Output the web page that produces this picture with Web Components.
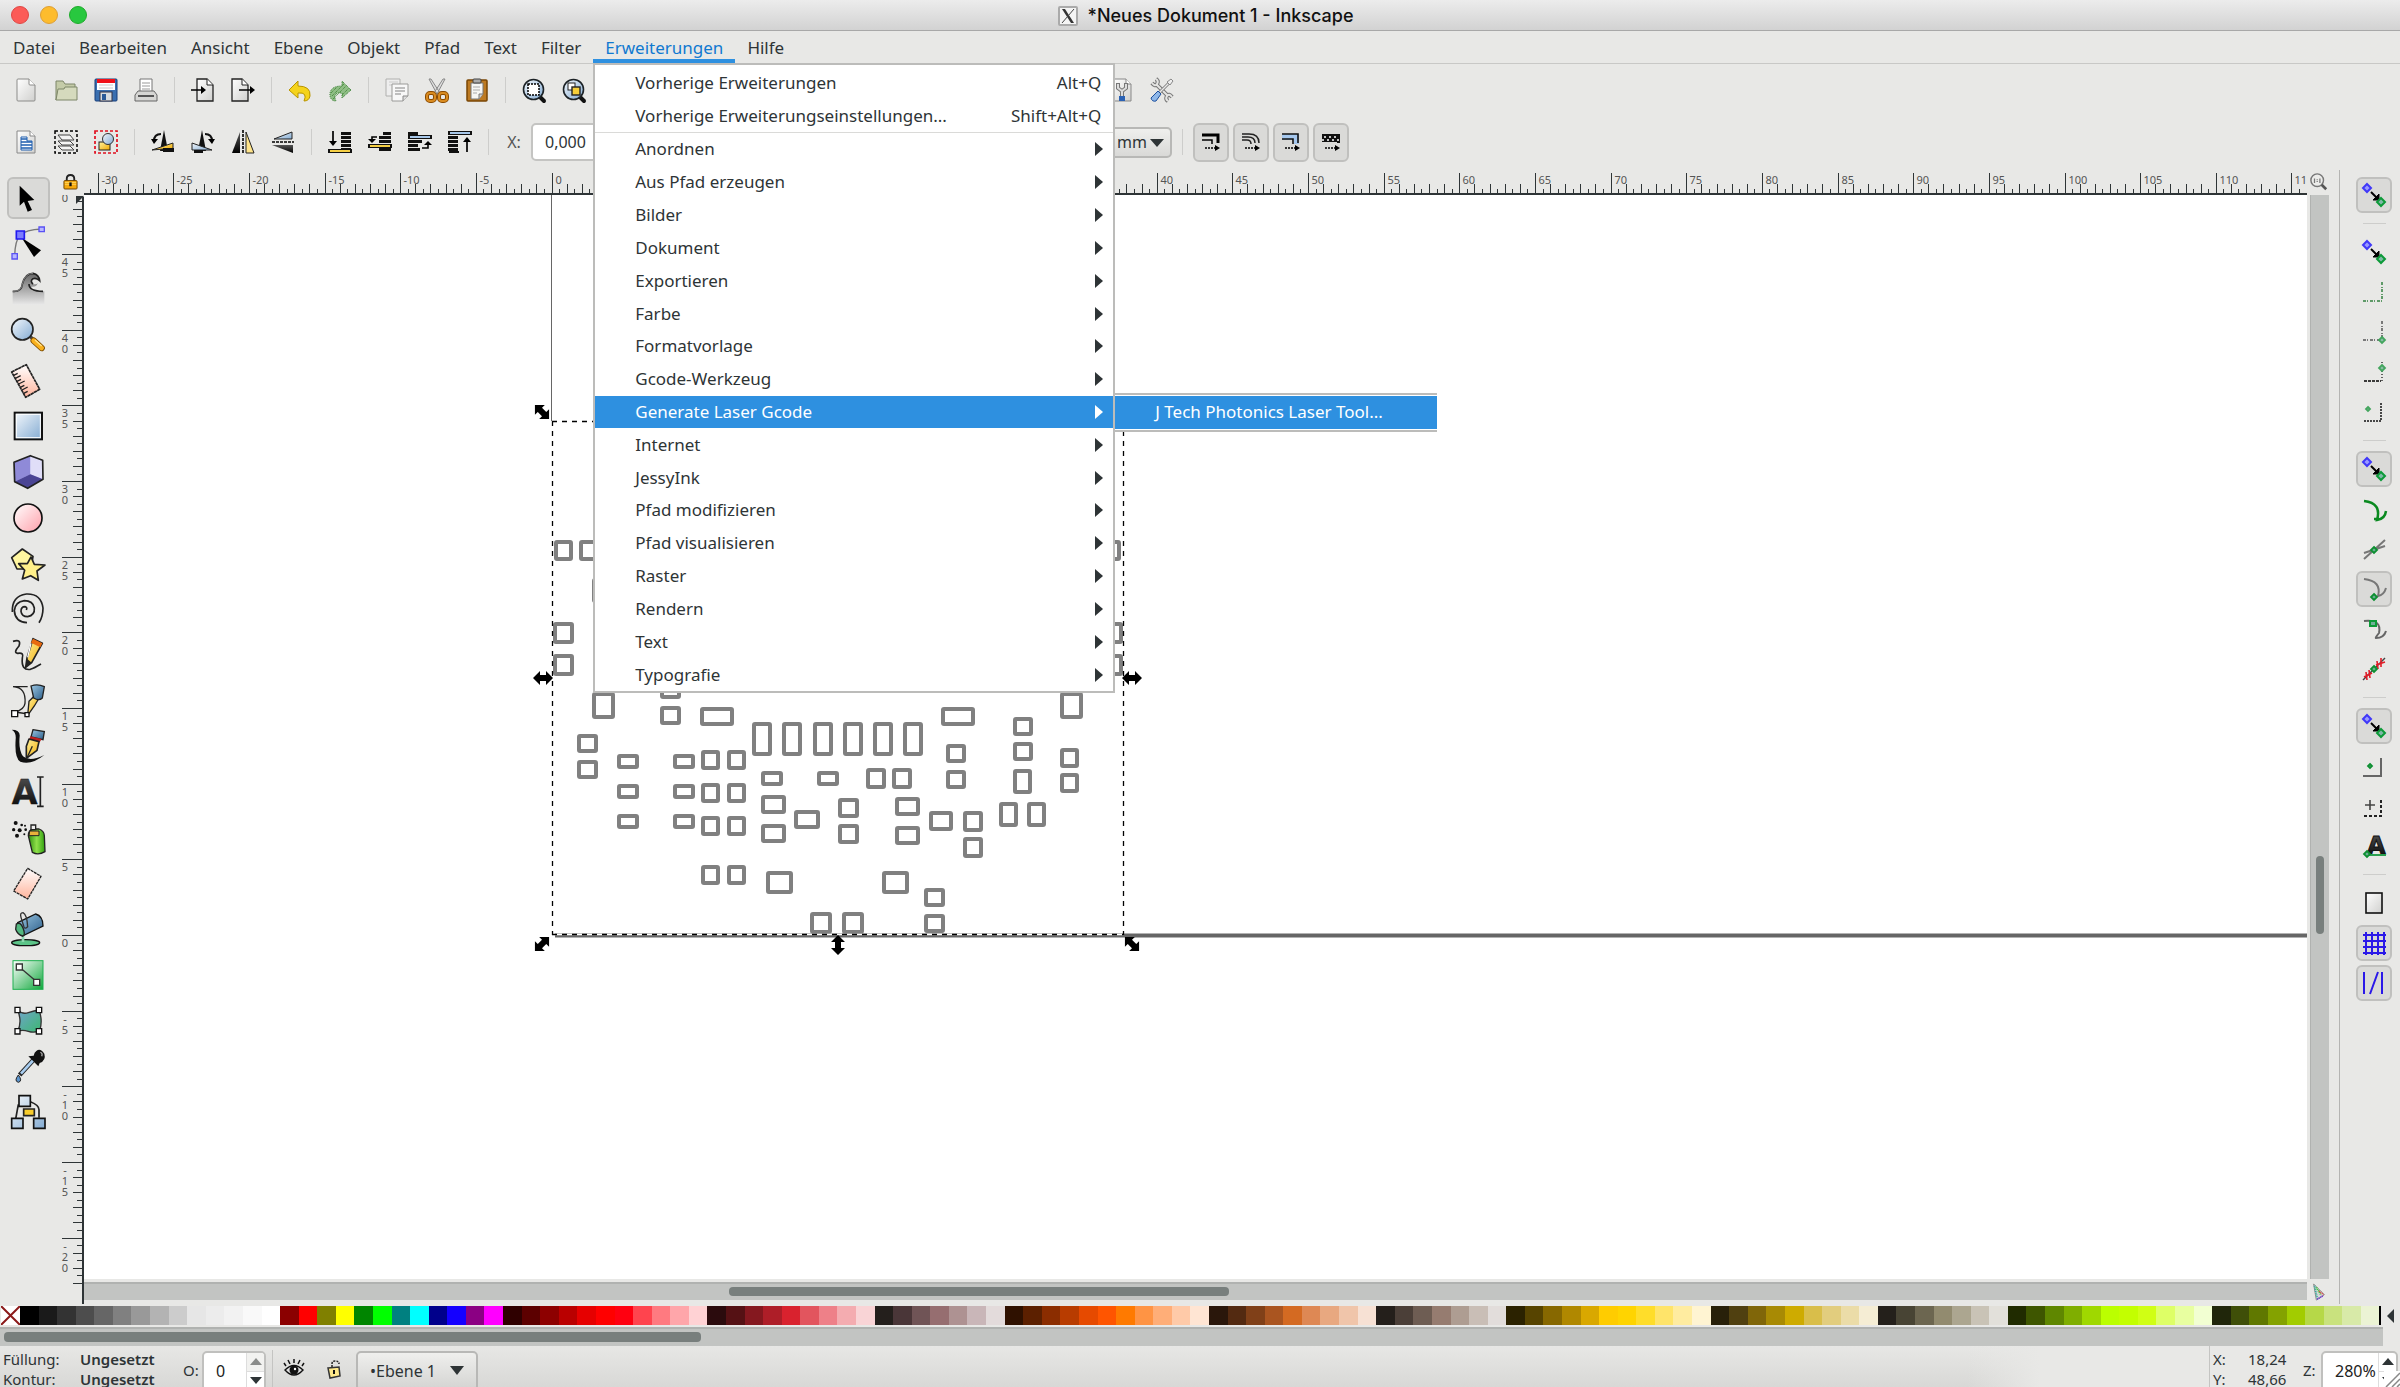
<!DOCTYPE html>
<html lang="de">
<head>
<meta charset="utf-8">
<title>*Neues Dokument 1 - Inkscape</title>
<style>
html,body{margin:0;height:100%}
body{font:17px/20px "Noto Sans","Open Sans",sans-serif;color:#2e3436;background:#e8e8e6;overflow:hidden}
</style>
</head>
<body>
<ink-window></ink-window>
<script>
const DEFS = `<defs>
<linearGradient id="blue" x1="0" y1="0" x2="1" y2="1"><stop offset="0" stop-color="#f4f8fc"/><stop offset="1" stop-color="#83abd2"/></linearGradient>
<linearGradient id="pink" x1="0" y1="0" x2="1" y2="1"><stop offset="0" stop-color="#fff"/><stop offset="1" stop-color="#ffa0aa"/></linearGradient>
<linearGradient id="skin" x1="0" y1="0" x2="0" y2="1"><stop offset="0" stop-color="#fff"/><stop offset="1" stop-color="#ffb49c"/></linearGradient>
<linearGradient id="gray" x1="0" y1="0" x2="0" y2="1"><stop offset="0" stop-color="#666"/><stop offset="1" stop-color="#e8e8e8"/></linearGradient>
<linearGradient id="paper" x1="0" y1="0" x2="1" y2="1"><stop offset="0" stop-color="#fff"/><stop offset="1" stop-color="#d0d0ce"/></linearGradient>
<linearGradient id="ink" x1="0" y1="0" x2="0" y2="1"><stop offset="0" stop-color="#555"/><stop offset="1" stop-color="#000"/></linearGradient>
<linearGradient id="gold" x1="0" y1="0" x2="1" y2="1"><stop offset="0" stop-color="#fff3a0"/><stop offset="1" stop-color="#f0a800"/></linearGradient>
<linearGradient id="green" x1="0" y1="0" x2="1" y2="1"><stop offset="0" stop-color="#fff"/><stop offset="1" stop-color="#10a83c"/></linearGradient>
<linearGradient id="sea" x1="0" y1="0" x2="1" y2="1"><stop offset="0" stop-color="#70a4cc"/><stop offset="1" stop-color="#3cb870"/></linearGradient>
<linearGradient id="can" x1="0" y1="0" x2="1" y2="0"><stop offset="0" stop-color="#2f8f10"/><stop offset=".5" stop-color="#8fe04a"/><stop offset="1" stop-color="#30a010"/></linearGradient>
<linearGradient id="steel" x1="0" y1="0" x2="1" y2="1"><stop offset="0" stop-color="#9cc8e4"/><stop offset="1" stop-color="#2a5c88"/></linearGradient>
</defs>`;
const bars = (x, w) => [0,1,2,3,4].map((i)=>`<rect x="${x[i]}" y="${2+i*4}" width="${w[i]}" height="3" fill="#111"/>`).join('');
const lens = inner => `<path d="M17 18l5 5" stroke="#111" stroke-width="4" stroke-linecap="round"/><circle cx="11.500" cy="11.500" r="10" fill="url(#blue)" stroke="#1c2226" stroke-width="1.600"/>${inner}`;
const page = `<path d="M3 1h13l5 5v17H3z" fill="url(#paper)" stroke="#888" stroke-linejoin="round"/><path d="M16 1v5h5" fill="#fff" stroke="#888"/>`;
const snapTo = `<path d="M9 9l8 8" stroke="#000" stroke-width="2"/><path d="M17 11v6h-6z" stroke="#000"/><path d="M5 1l4 4-4 4-4-4z" fill="#9a9aff" stroke="#4038f8" stroke-width="2"/><path d="M19 15l4 4-4 4-4-4z" fill="#80b8a8" stroke="#0c9a38" stroke-width="2"/>`;
const dot = (x,y,r=3) => `<path d="M${x} ${y-r}l${r} ${r}-${r} ${r}-${r}-${r}z" fill="#70b098" stroke="#0c8f30" stroke-width="1.800"/>`;
const A = (x,y,s) => `<text x="${x}" y="${y}" font-family="DejaVu Sans" font-weight="700" font-size="${s}" fill="url(#ink)" stroke="#111" stroke-width="1">A</text>`;
/* name: [viewBox size, drawing] */
const ICONS = {
new:[24,`<path d="M4 1h11l6 6v15q0 1-1 1H4q-1 0-1-1V2q0-1 1-1z" fill="url(#paper)" stroke="#8c8c8a"/><path d="M15 1v5q0 1 1 1h5" fill="#fff" stroke="#8c8c8a"/>`],
open:[24,`<path d="M2 22V3h7l2 3h10v6H5z" fill="#c4cba8" stroke="#7d8668"/><path d="M2 22l2-11h6l1-2h12v13z" fill="#d5dabd" stroke="#7d8668" stroke-linejoin="round"/>`],
save:[24,`<rect x="1" y="1" width="22" height="22" rx="1" fill="#3a6fb0" stroke="#173f7a"/><rect x="3" y="1" width="18" height="11" fill="#fff"/><rect x="3" y="1" width="18" height="4" fill="#f01018"/><path d="M5 7h14M5 10h14" stroke="#c8c8c8"/><rect x="6" y="14" width="12" height="9" fill="#d8dce0" stroke="#334"/><rect x="8" y="16" width="4" height="6" fill="#2a5a98"/>`],
print:[24,`<path d="M6 14V1h12v13" fill="#fff" stroke="#777"/><path d="M8 5h8M8 8h8M8 11h8" stroke="#999"/><path d="M4 13h16l3 4v6H1v-6z" fill="#d6d6d4" stroke="#666" stroke-linejoin="round"/><path d="M4 18h16" stroke="#555" stroke-width="2"/>`],
import:[24,`<path d="M6 1h10l6 6v16H6z" fill="url(#paper)" stroke="#222" stroke-width="1.300"/><path d="M16 1v6h6" fill="#fff" stroke="#222"/><path d="M0 12h12" stroke="#000" stroke-width="1.500"/><path d="M10 8l5 4-5 4z"/>`],
export:[24,`<path d="M1 1h10l6 6v16H1z" fill="url(#paper)" stroke="#222" stroke-width="1.300"/><path d="M11 1v6h6" fill="#fff" stroke="#222"/><path d="M8 12h12" stroke="#000" stroke-width="1.500"/><path d="M19 8l5 4-5 4z"/>`],
undo:[24,`<path d="M1 12l9-9v5q13 0 12 10-1 5-6 5 4-9-6-8v5z" fill="#f5d31c" stroke="#b89400" stroke-linejoin="round"/>`],
redo:[24,`<path d="M23 12l-9-9v5Q1 8 2 18q1 5 6 5-4-9 6-8v5z" fill="#8fbd85" stroke="#2f7a2a" stroke-dasharray="1 1"/><path d="M3 15l7-7m-6 10l12-12M5 21L18 8M14 17l7-7" stroke="#39832f" stroke-dasharray="1 1"/>`],
copy:[24,`<path d="M1 1h14v17H1z" fill="#eee" stroke="#b0b0ae"/><path d="M4 4h9M4 7h9" stroke="#ccc"/><path d="M7 6h16v12l-5 5H7z" fill="#f8f8f8" stroke="#9a9a98"/><path d="M23 18h-5v5" fill="#ddd" stroke="#888"/><path d="M10 10h10M10 13h10M10 16h6" stroke="#aaa" stroke-width="1.500"/>`],
cut:[24,`<path d="M4 1l2-0 9 14-3 1zM20 1l-2 0-9 14 3 1z" fill="#ddd" stroke="#888"/><rect x="2" y="15" width="8" height="8" rx="3" fill="none" stroke="#8a4a00" stroke-width="4"/><rect x="14" y="15" width="8" height="8" rx="3" fill="none" stroke="#8a4a00" stroke-width="4"/><rect x="2" y="15" width="8" height="8" rx="3" fill="none" stroke="#d98b20" stroke-width="2"/><rect x="14" y="15" width="8" height="8" rx="3" fill="none" stroke="#d98b20" stroke-width="2"/>`],
paste:[24,`<rect x="2" y="2" width="20" height="21" rx="1" fill="#bd7a22" stroke="#7a4604" stroke-width="1.500"/><path d="M6 5h12v11l-4 5H6z" fill="#f6f6f4" stroke="#777"/><path d="M18 16h-4v5" fill="#ccc" stroke="#777"/><path d="M8 9h7M8 12h7M8 15h4" stroke="#aaa"/><rect x="8" y="1" width="8" height="4" rx="1" fill="#aaa" stroke="#444"/>`],
zoomsel:[24,lens(`<rect x="6" y="6" width="11" height="11" fill="#fff" stroke="#000" stroke-width="1.500" stroke-dasharray="2 1"/>`)],
zoomdraw:[24,lens(`<rect x="6" y="5" width="7" height="7" fill="#fff" stroke="#222"/><rect x="10" y="9" width="8" height="8" fill="#f6cf3a" stroke="#222" stroke-width="1.400"/>`)],
docprefs:[24,page+`<path d="M8 5v5l4 3 4-3V5M12 12v11" fill="none" stroke="#777" stroke-width="4"/><path d="M8 6v4l4 3 4-3V6M12 12v8" fill="none" stroke="#ddd" stroke-width="2"/><rect x="9" y="18" width="6" height="5" fill="#2b62b4"/>`],
prefs:[24,`<path d="M2 5q3 4 5 1 2-3-1-5M7 7l11 11M22 19q-3-4-5-1-2 3 1 5" fill="none" stroke="#777" stroke-width="4"/><path d="M2 5q3 4 5 1 2-3-1-5M7 7l11 11M22 19q-3-4-5-1-2 3 1 5" fill="none" stroke="#e4e4e2" stroke-width="2"/><path d="M20 4L10 14" stroke="#777" stroke-width="3"/><path d="M20 4L10 14" stroke="#e8e8e8" stroke-width="1.500"/><path d="M23 3l-3 4-3-3 4-3z" fill="#eee" stroke="#888"/><path d="M8 13l3 3-5 7q-4 1-5-3z" fill="#8fb8ea" stroke="#1d4f9c"/>`],
all:[24,page+`<path d="M7 7h6v4h5v9H7z" fill="#fff" stroke="#1f5fb0"/><path d="M7 9h6M7 12h11M7 15h11M7 18h11" stroke="#1f5fb0" stroke-width="1.600"/>`],
alllayers:[24,`<rect x="1" y="1" width="22" height="22" fill="none" stroke="#000" stroke-width="1.500" stroke-dasharray="3 2"/><path d="M4 16l12-0 4 4H8zM4 11h12l4 4H8zM4 5h12l4 5H8z" fill="#f4f4f4" stroke="#444"/>`],
deselect:[24,`<rect x="1" y="1" width="22" height="22" fill="none" stroke="#e01020" stroke-width="1.700" stroke-dasharray="3 2"/><rect x="5" y="12" width="11" height="8" fill="url(#gold)" stroke="#222"/><circle cx="14" cy="9" r="5.500" fill="url(#blue)" stroke="#333"/>`],
rotl:[24,`<path d="M13 0l4 21h-8z" fill="#111"/><path d="M1 20l21-7v6h-9z" fill="url(#gold)" stroke="#222"/><path d="M12 18h11v4H12z" fill="#111"/><path d="M3 11q0-7 7-7" fill="none" stroke="#111" stroke-width="2"/><path d="M0 9h7l-4 5z"/>`],
rotr:[24,`<path d="M11 0L7 21h8z" fill="#111"/><path d="M1 13l20 7H1z" fill="url(#blue)" stroke="#222"/><path d="M3 20h9v3H3z" fill="#111"/><path d="M21 11q0-7-7-7" fill="none" stroke="#111" stroke-width="2"/><path d="M24 9h-7l4 5z"/>`],
fliph:[24,`<path d="M9 2v21H1z" fill="url(#ink)"/><path d="M15 2v21h8z" fill="#ffe48a" stroke="#222"/><path d="M12 0v24" stroke="#000" stroke-width="1.600" stroke-dasharray="3 1"/>`],
flipv:[24,`<path d="M21 2v7H3z" fill="url(#blue)" stroke="#222"/><path d="M1 12h22" stroke="#000" stroke-width="1.600" stroke-dasharray="3 1"/><path d="M1 15h21v8z" fill="url(#ink)"/>`],
bottom:[24,bars([13,13,13,13,13],[10,10,10,10,10])+`<path d="M5 1v12" stroke="#000" stroke-width="1.700"/><path d="M1 11h8l-4 5z"/><rect x="0" y="19" width="24" height="4" fill="#111"/><rect x="2" y="20" width="20" height="2" fill="#f5cf45"/>`],
lower:[24,bars([15,11,11,13,11],[8,12,12,10,12])+`<path d="M9 7H4v4" fill="none" stroke="#000" stroke-width="1.600"/><path d="M0 9h8l-4 4z"/><rect x="0" y="14" width="24" height="4" fill="#111"/><rect x="2" y="15" width="20" height="2" fill="#f5cf45"/>`],
raise:[24,bars([0,0,0,0,0],[10,14,14,10,12])+`<rect x="0" y="5" width="24" height="4" fill="#111"/><rect x="2" y="6" width="20" height="2" fill="#a8c8ea"/><path d="M14 18h6v-4" fill="none" stroke="#000" stroke-width="1.600"/><path d="M16 15h8l-4-4z"/>`],
top:[24,bars([0,0,0,0,0],[10,10,10,10,10])+`<path d="M1 22h10" stroke="#111" stroke-width="2"/><rect x="0" y="1" width="24" height="4" fill="#111"/><rect x="2" y="2" width="20" height="2" fill="#a8c8ea"/><path d="M19 22V10" stroke="#000" stroke-width="1.700"/><path d="M15 12h8l-4-5z"/>`],
affstroke:[24,`<path d="M3 5h16v8" fill="none" stroke="#000" stroke-width="3"/><path d="M3 10h10v4" fill="none" stroke="#000" stroke-width="1.500"/><path d="M6 18h11" stroke="#000" stroke-width="1.600" stroke-dasharray="2 1"/><path d="M16 15l5 3-5 3z"/>`],
affcorner:[24,`<path d="M3 4h7q10 0 10 9M3 7h6q7 0 7 6M3 10h5q4 0 4 4" fill="none" stroke="#222" stroke-width="1.500"/><path d="M6 18h11" stroke="#000" stroke-width="1.600" stroke-dasharray="2 1"/><path d="M16 15l5 3-5 3z"/>`],
affgrad:[24,`<path d="M3 4h17v10h-5v-4H3z" fill="#a6c8ee"/><path d="M3 4h16v9M3 9h11v5" fill="none" stroke="#111" stroke-width="1.600"/><path d="M6 18h11" stroke="#000" stroke-width="1.600" stroke-dasharray="2 1"/><path d="M16 15l5 3-5 3z"/>`],
affpat:[24,`<path d="M3 4h18v9h-3v-1H3z" fill="#111"/><path d="M5 7h15" stroke="#fff" stroke-width="1.500" stroke-dasharray="2 3"/><path d="M3 10h17" stroke="#fff" stroke-width="1.500" stroke-dasharray="2 3"/><path d="M6 18h11" stroke="#000" stroke-width="1.600" stroke-dasharray="2 1"/><path d="M16 15l5 3-5 3z"/>`],
lock:[16,`<path d="M4 8V5q0-4 4-4t4 4v3" fill="none" stroke="#222" stroke-width="2"/><rect x="1" y="7" width="14" height="9" rx="1" fill="#f5a80c" stroke="#6a3f00"/><path d="M2 9h12M2 11h12" stroke="#ffd35c"/><path d="M8 9v4" stroke="#111" stroke-width="2.500"/>`],
unlock:[20,`<path d="M8 8V5q0-3 3-3 4 0 4 3" fill="none" stroke="#222" stroke-width="1.500" stroke-dasharray="2 1"/><path d="M4 9l11-1 1 9-10 2z" fill="#ffe98a" stroke="#333" stroke-width="1.500"/><path d="M10 11v4" stroke="#111" stroke-width="2"/>`],
eye:[20,`<path d="M1 11q9-9 18 0-9 10-18 0z" fill="#ddd" stroke="#111" stroke-width="1.400"/><circle cx="10" cy="11" r="4.500" fill="#111"/><circle cx="11" cy="10" r="1.200" fill="#fff"/><path d="M2 7L0 4m6 1L4 1m6 3V0m4 5l2-4m2 6l2-3" stroke="#111" stroke-width="1.500"/>`],
zoom11:[20,`<circle cx="8" cy="8" r="7" fill="#ececea" stroke="#777" stroke-width="1.600"/><path d="M13 13l5 5" stroke="#555" stroke-width="3"/><path d="M5 6v5M11 6v5M8 7v1M8 9v1" stroke="#777" stroke-width="1.400"/>`],
cms:[20,`<path d="M4 1l12 12-9 6z" fill="#d8d8d8" stroke="#888"/><path d="M5 3l3 14" stroke="#2a9" stroke-width="2" stroke-dasharray="1 1"/><path d="M7 5l5 8" stroke="#2c2" stroke-width="2" stroke-dasharray="1 1"/><path d="M10 9l5 4" stroke="#d33" stroke-width="2" stroke-dasharray="1 1"/><path d="M8 18l7-4" stroke="#62d" stroke-width="2" stroke-dasharray="1 1"/>`],
xapp:[20,`<rect x="1" y="1" width="18" height="18" rx="1" fill="#f4f4f4" stroke="#aaa" stroke-width="2"/><path d="M4 3h3l9 14h-3z" fill="#333"/><path d="M16 3L4 17" stroke="#444"/>`],
select:[102,`<path d="M26 14v60l13-12 11 30 13-5-13-27 20-3z"/>`],
node:[102,`<path d="M11 88Q12 40 28 24T92 6" fill="none" stroke="#777" stroke-width="4"/><path d="M32 32l58 38-21 20z"/><g fill="#b8b8ff" stroke="#5a52f4" stroke-width="4"><path d="M3 80h16v16H3zM84 0h16v14H84z"/></g><path d="M16 12h24v24H16z" fill="#7c7cff" stroke="#2018f0" stroke-width="5"/>`],
tweak:[102,`<path d="M5 58Q32 60 34 36 42 4 66 4 84 8 86 26q-10-10-20-6-10 8 0 16 12 2 14-4-2 14-18 12-8 8 8 14 16 2 30 0v40H5z" fill="url(#gray)"/><path d="M5 58Q32 60 34 36 42 4 66 4 84 8 86 26q-10-10-20-6-10 8 0 16M54 36q0 22 42 22" fill="none" stroke="#222" stroke-width="5"/><path d="M5 58Q32 60 34 36 42 4 66 4" fill="none" stroke="#ddd" stroke-width="1.500"/>`],
zoom:[102,`<path d="M58 56l14 14" stroke="#444" stroke-width="10"/><path d="M68 68l24 22" stroke="#7a4a00" stroke-width="19" stroke-linecap="round"/><path d="M68 68l24 22" stroke="#f9b01c" stroke-width="14" stroke-linecap="round"/><path d="M72 66l20 18" stroke="#ffe28a" stroke-width="4"/><circle cx="34" cy="34" r="32" fill="url(#blue)" stroke="#222" stroke-width="5"/>`],
measure:[102,`<path d="M2 24L46 2l40 74-42 24z" fill="url(#skin)" stroke="#222" stroke-width="5" stroke-linejoin="round" stroke-dasharray="10 1"/><path d="M8 34l12-6M13 43l16-8M18 52l12-6M23 60l18-9M28 70l12-6M33 78l17-9M38 88l12-6" stroke="#222" stroke-width="4"/>`],
rect:[102,`<rect x="11" y="11" width="82" height="80" fill="url(#blue)" stroke="#111" stroke-width="6"/><rect x="16" y="16" width="72" height="70" fill="none" stroke="#fff" stroke-width="3"/>`],
box:[102,`<path d="M9 22L58 2l37 14 1 57-46 27-39-20z" fill="#b4b0ec"/><path d="M9 22L58 2v56L11 80z" fill="#8f8ad8"/><path d="M58 2l37 14 1 57-38-15z" fill="#e0def8"/><path d="M11 80l47-22 38 15-46 27z" fill="#4a4494"/><path d="M9 22L58 2l37 14 1 57-46 27-39-20z" fill="none" stroke="#222" stroke-width="5" stroke-linejoin="round"/>`],
circle:[102,`<circle cx="51" cy="51" r="42" fill="url(#pink)" stroke="#111" stroke-width="5"/>`],
star:[102,`<path d="M2 32L34 6l32 22-6 38H18z" fill="#fff6a0" stroke="#222" stroke-width="5" stroke-linejoin="round"/><path d="M60 30l10 22 32 2-24 18 4 28-23-14-25 10 7-26-18-20 26 0z" fill="#fff08a" stroke="#222" stroke-width="5" stroke-linejoin="round"/>`],
spiral:[102,`<path d="M46 54q4-8-4-10-12 0-12 14 2 16 20 16 22-4 20-26-4-22-30-22Q12 30 10 56q2 34 38 36M4 60Q2 12 46 6q44-2 50 42 0 26-12 44" fill="none" stroke="#222" stroke-width="5"/>`],
pencil:[102,`<path d="M6 10q26-8 18 14-18 20-4 22 20-4 14 14-4 38 24 34 12-4 32-16" fill="none" stroke="#222" stroke-width="5"/><path d="M66 2l28 14-32 58-18 14 4-28z" fill="url(#gold)" stroke="#222" stroke-width="5" stroke-linejoin="round"/><path d="M66 2l28 14-6 12-28-14z" fill="#e86a10"/><path d="M48 62l14 12-18 14z" fill="#222"/><path d="M60 16L50 58" stroke="#fff" stroke-width="4"/>`],
pen:[102,`<path d="M6 8q40 2 36 50-2 18-30 26l40 6M6 8h44" fill="none" stroke="#222" stroke-width="4"/><path d="M54 52l14-14 14 8-12 20-20 28z" fill="url(#gold)" stroke="#222" stroke-width="4"/><path d="M60 6q20-8 40 2l-6 34q-10 10-26 0z" fill="url(#steel)" stroke="#222" stroke-width="4"/><path d="M2 80h18v18H2zM42 86h12v12H42z" fill="#fff" stroke="#111" stroke-width="4"/>`],
calli:[102,`<path d="M2 2q26 0 24 20-4 40 10 60 20 18 64-4-40 32-72 20Q10 88 14 30 16 10 2 2z" fill="#111"/><path d="M66 2l34 6-4 24-36-8z" fill="url(#steel)" stroke="#222" stroke-width="4"/><path d="M58 22l34 8-6 10-32-8z" fill="#c02020"/><path d="M54 30l30 8-6 26-32 24V52z" fill="url(#gold)" stroke="#222" stroke-width="5" stroke-linejoin="round"/><path d="M48 86l16-34" stroke="#222" stroke-width="4"/>`],
text:[102,A(2,88,100)+`<path d="M88 8v84M78 6h20M78 94h20" stroke="#222" stroke-width="5"/>`],
spray:[102,`<path d="M52 44q0-16 14-20h18q16 6 16 20l2 48q-20 12-38 2z" fill="url(#can)" stroke="#222" stroke-width="4"/><path d="M56 30h28v14H54z" fill="#e9b23a" stroke="#222" stroke-width="3"/><path d="M60 12h14v14H60z" fill="#eee" stroke="#222" stroke-width="4"/><g fill="#111"><circle cx="14" cy="6" r="6"/><circle cx="32" cy="12" r="4"/><circle cx="8" cy="26" r="5"/><circle cx="26" cy="28" r="6"/><circle cx="44" cy="26" r="4"/><circle cx="18" cy="44" r="6"/><circle cx="40" cy="40" r="3"/><circle cx="42" cy="14" r="3"/></g>`],
eraser:[102,`<path d="M50 4l40 24-40 68L8 72z" fill="url(#skin)" stroke="#222" stroke-width="4" stroke-linejoin="round" stroke-dasharray="9 2"/>`],
bucket:[102,`<ellipse cx="44" cy="92" rx="42" ry="9" fill="#5cc488" stroke="#111" stroke-width="4"/><path d="M36 66v24" stroke="#8fd8b0" stroke-width="8"/><path d="M20 32l54-26q22 6 22 36L34 72Q16 60 20 32z" fill="url(#steel)" stroke="#111" stroke-width="4"/><path d="M16 36q12-8 20 12t0 24Q20 70 14 52z" fill="#54b880" stroke="#222" stroke-width="4"/><path d="M30 16q-4-14 6-14 12 6 14 42-10 10-12-2z" fill="none" stroke="#333" stroke-width="4"/>`],
gradient:[102,`<rect x="6" y="8" width="90" height="86" fill="url(#green)" stroke="#1eb050" stroke-width="3"/><path d="M26 28l52 44" stroke="#333" stroke-width="4"/><path d="M16 18h18v18H16zM68 64h18v18H68z" fill="#fff" stroke="#333" stroke-width="4"/>`],
mesh:[102,`<path d="M20 18q14 14 32 8t32-8q12 32 2 62-16 8-34 2t-32 0Q34 54 20 18z" fill="url(#sea)" stroke="#333" stroke-width="4"/><path d="M12 10h15v16H12zM76 10h16v16H76zM12 74h15v16H12zM76 74h16v16H76z" fill="#fff" stroke="#111" stroke-width="4"/>`],
dropper:[102,`<path d="M70 30L26 78" stroke="#222" stroke-width="14"/><path d="M70 30L30 74" stroke="#a8cdf0" stroke-width="8"/><path d="M52 22l30 30 4-10q20-8 14-28Q88-4 76 6 70 10 68 20z" fill="#111"/><path d="M88 10q8 2 4 12" stroke="#aaa" stroke-width="4" fill="none"/><path d="M22 78q14 18 0 22-14-4 0-22z" fill="#5c94cc" stroke="#222" stroke-width="3"/>`],
connector:[102,`<path d="M22 28L14 72M58 20q26 10 26 24v24" fill="none" stroke="#222" stroke-width="5"/><path d="M24 2h34v32H24zM2 70h34v30H2zM68 70h34v30H68z" fill="url(#blue)" stroke="#111" stroke-width="5"/><path d="M38 42h32v20H38z" fill="#f8cc2c" stroke="#222" stroke-width="5"/>`],
snap:[24,snapTo],
bbox:[24,`<path d="M1 21h19V2" fill="none" stroke="#5f9a68" stroke-width="2" stroke-dasharray="3 1 1 2"/>`],
bboxedge:[24,`<g opacity=".75"><path d="M1 20h19V1" fill="none" stroke="#555" stroke-width="2" stroke-dasharray="3 1 1 2"/>${dot(20,20)}</g>`],
bboxmid:[24,`<g opacity=".75"><path d="M2 21h17" stroke="#000" stroke-width="2" stroke-dasharray="3 1"/><path d="M20 21V2" stroke="#333" stroke-width="2" stroke-dasharray="1 2"/>${dot(20,8)}</g>`],
bboxcen:[24,`<g opacity=".75"><path d="M2 21h17V3" fill="none" stroke="#111" stroke-width="2" stroke-dasharray="2 1"/>${dot(6,9,2)}</g>`],
path:[24,`<path d="M2 4q18 2 13 19 8-1 9-9M12 22h5" fill="none" stroke="#0a8a20" stroke-width="2.500"/>`],
cross:[24,`<path d="M2 22L23 3M2 16l21-7" stroke="#777" stroke-width="2"/>`+dot(12,13)],
cusp:[24,`<path d="M2 2q18 2 14 17 6-1 8-8" fill="none" stroke="#777" stroke-width="2"/>`+dot(12,20)],
smooth:[24,`<path d="M2 4q18-2 15 12-4 5-3 5 8 0 10-7" fill="none" stroke="#666" stroke-width="2"/><rect x="8" y="4" width="6" height="5" fill="#70b098" stroke="#0c9a38" stroke-width="2"/>`],
mid:[24,`<path d="M1 23L23 1" stroke="#444" stroke-width="1.500"/><path d="M4 15l1 8M7 13l1 8M2 20l8-4M15 4l1 8M19 1l0 9M14 8l9-3" stroke="#e01c28" stroke-width="1.600"/>`+dot(12,12)],
center:[24,`<path d="M1 22h18V4" fill="none" stroke="#666" stroke-width="2"/>`+dot(8,12,2)],
rotcen:[24,`<path d="M2 22h17V4" fill="none" stroke="#222" stroke-width="2" stroke-dasharray="3 2"/><path d="M8 6v10M3 11h10" stroke="#444" stroke-width="1.600"/>`],
snaptext:[24,A(5,20,24)+`<path d="M4 21h20" stroke="#2aa050" stroke-width="2"/>`+dot(5,20)],
pageb:[24,`<rect x="4" y="2" width="16" height="20" fill="url(#paper)" stroke="#111" stroke-width="1.600"/>`],
grid:[24,`<path d="M4 1v23M10 1v23M16 1v23M22 1v23M1 4h23M1 10h23M1 16h23M1 22h23" stroke="#2a18e8" stroke-width="2"/>`],
guides:[24,`<path d="M2 1v22M20 1v22M16 1L8 23" stroke="#2a18e8" stroke-width="2"/>`],
};
class Base extends HTMLElement {
  constructor(){ super(); this.attachShadow({mode:'open'}); }
  connectedCallback(){ this.shadowRoot.innerHTML = this.render(); }
}
const define = (name, render) => customElements.define(name, class extends Base { render(){ return render(this); } });

define('ink-icon', el => {
  const [v, art] = ICONS[el.getAttribute('name')];
  const s = el.getAttribute('size') || 24;
  return `<style>:host{display:inline-flex}svg{display:block;overflow:visible}</style><svg width="${s}" height="${s}" viewBox="0 0 ${v} ${v}" fill="#000" aria-hidden="true">${DEFS}${art}</svg>`;
});

define('ink-titlebar', () => `<style>
:host{display:flex;align-items:center;height:30px;border-bottom:1px solid #a8a8a8;background:linear-gradient(#ececec,#d2d2d2);color:#111;font:500 18px/22px Inter,sans-serif;flex:none}
nav{display:flex;gap:11px;padding-left:11px;flex:1}
button{width:18px;height:18px;border-radius:50%;padding:0;border:1px solid}
.c{background:#fc5b57;border-color:#df4744}.m{background:#fdbc2e;border-color:#de9f34}.z{background:#28c83f;border-color:#1eab2b}
h1{font:inherit;margin:0;padding-top:1px;display:flex;gap:10px;align-items:center}
i{flex:1}
</style><nav><button class="c" aria-label="Schließen"></button><button class="m" aria-label="Minimieren"></button><button class="z" aria-label="Zoomen"></button></nav><h1><ink-icon name="xapp" size="20"></ink-icon><slot></slot></h1><i></i>`);

define('ink-menu-item', el => `<style>
:host{display:block;height:33px}
button{all:unset;box-sizing:border-box;display:flex;align-items:center;justify-content:space-between;width:100%;height:100%;padding:0 12px 0 40px;white-space:pre}
:host([active]) button{background:#2e90e0;color:#fff}
svg{margin-right:-2px}
</style><button role="menuitem"><slot></slot>${el.hasAttribute('key')?`<span>${el.getAttribute('key')}</span>`:''}${el.hasAttribute('sub')?'<svg width="8" height="14" viewBox="0 0 8 14" fill="currentColor"><path d="M0 0l8 7-8 7z"/></svg>':''}</button>`);

define('ink-menu', () => `<style>
:host{display:block;box-sizing:border-box;background:#fff;border:2px solid #bcbcba;color:#2e3436;z-index:10}
</style><div role="menu"><slot></slot></div>`);

define('ink-menubar', () => {
  const m = ['Datei','Bearbeiten','Ansicht','Ebene','Objekt','Pfad','Text','Filter','Erweiterungen','Hilfe'];
  const subs = ['Anordnen','Aus Pfad erzeugen','Bilder','Dokument','Exportieren','Farbe','Formatvorlage','Gcode-Werkzeug','Generate Laser Gcode','Internet','JessyInk','Pfad modifizieren','Pfad visualisieren','Raster','Rendern','Text','Typografie'];
  return `<style>
:host{display:flex;height:32px;padding-left:1px;border-bottom:1px solid #c8c8c6;flex:none}
.m{position:relative;display:flex}
.m>button{all:unset;box-sizing:border-box;height:32px;padding:1px 12px 0;line-height:32px}
.on>button{color:#1079d0;box-shadow:inset 0 -4px #2e90e0}
.drop{position:absolute;top:32px;left:0;width:522px;padding-top:1px}
.group{display:grid;grid-auto-rows:1fr;height:558px}
.group>ink-menu-item,.row>ink-menu-item{height:100%}
.row{position:relative}
.sub{position:absolute;top:-3px;left:518px;width:324px;padding:1px 0;border-right:0}
hr{margin:0;border:0;border-top:1px solid #dadad8}
</style>` + m.map(t => t !== 'Erweiterungen' ? `<div class="m"><button>${t}</button></div>` :
`<div class="m on"><button aria-expanded="true">${t}</button><ink-menu class="drop">
<ink-menu-item key="Alt+Q">Vorherige Erweiterungen</ink-menu-item><ink-menu-item key="Shift+Alt+Q">Vorherige Erweiterungseinstellungen...</ink-menu-item><hr>
<div class="group">${subs.map(s => s !== 'Generate Laser Gcode' ? `<ink-menu-item sub>${s}</ink-menu-item>` : `<div class="row"><ink-menu-item sub active>${s}</ink-menu-item><ink-menu class="sub"><ink-menu-item active>J Tech Photonics Laser Tool...</ink-menu-item></ink-menu></div>`).join('')}</div>
</ink-menu></div>`).join('');
});

define('ink-tool', el => `<style>
:host{display:flex;align-items:center;justify-content:center;width:40px;height:40px;flex:none}
button{all:unset;box-sizing:border-box;display:flex;align-items:center;justify-content:center;width:36px;height:36px;border-radius:6px;border:2px solid transparent}
:host([tall]) button{height:39px}
:host([big]){width:100%;height:auto}
:host([big]) button{width:43px;height:42px}
:host([on]) button{background:#dadad8;border-color:#c0c0be}
</style><button aria-label="${el.getAttribute('icon')}"><ink-icon name="${el.getAttribute('icon')}" size="${el.getAttribute('size')||24}"></ink-icon></button>`);

const tools = (list, extra='') => list.split(' ').map(n => n === '|' ? '<i class="sep"></i>' : n[0] === '+' ? `<ink-tool ${extra} on icon="${n.slice(1)}"></ink-tool>` : `<ink-tool ${extra} icon="${n}"></ink-tool>`).join('');
const SEP = `.sep{flex:none;width:1px;height:26px;margin:0 8px;background:#cdcdcb}`;

define('ink-commandbar', () => `<style>:host{display:flex;align-items:center;height:52px;padding-left:6px;flex:none}${SEP}.gap{flex:0 0 508px}</style>
${tools('new open save print | import export | undo redo | copy cut paste | zoomsel zoomdraw')}<div class="gap"></div>${tools('docprefs prefs')}`);

define('ink-controlbar', () => `<style>:host{display:flex;align-items:center;height:52px;padding-left:6px;flex:none}${SEP}
label{width:34px;text-align:center;font-size:16px;color:#555}
input,select{appearance:none;box-sizing:border-box;margin:0;font:inherit;color:inherit;border:2px solid #c4c4c2;border-radius:5px}
input{width:100px;height:38px;padding:0 12px;background:#fff;font-size:16px;outline:0}
.gap{flex:0 0 461px}
.unit{position:relative;margin-right:2px}
select{width:80px;height:31px;padding:0 0 0 23px;background:linear-gradient(#efefed,#d9d9d7);border-color:#b8b8b6;font-size:16px}
svg{position:absolute;right:8px;top:12px}
</style>${tools('all alllayers deselect | rotl rotr fliph flipv | bottom lower raise top |')}
<label for="x">X:</label><input id="x" value="0,000"><div class="gap"></div>
<div class="unit"><select aria-label="Einheit"><option>mm</option></select><svg width="14" height="8"><path d="M0 0h14l-7 8z" fill="#2e3436"/></svg></div>
${tools('| +affstroke +affcorner +affgrad +affpat','tall')}`);

define('ink-toolbox', () => `<style>:host{display:block;padding-top:7px}div{display:grid;grid-template-rows:repeat(21,1fr);height:960px;align-items:center}</style>
<div>${tools('+select node tweak zoom measure rect box circle star spiral pencil pen calli text spray eraser bucket gradient mesh dropper connector','big size="34"')}</div>`);

define('ink-snapbar', () => `<style>:host{display:flex;flex-direction:column;align-items:center;padding:5px 0 0 8px;border-left:1px solid #b4b4b2;margin-top:2px}
.sep{flex:none;height:1px;width:23px;margin:8px 0;background:#cdcdcb}</style>
${tools('+snap | snap bbox bboxedge bboxmid bboxcen | +snap path cross +cusp smooth mid | +snap center rotcen snaptext | pageb +grid +guides')}`);

/* Pixels for one document millimetre and the screen place of the origin */
const UNIT = 15.13, OX = 551.5 - 84, OY = 935 - 195;
/* Stretch of the top ruler that the open menu covers */
const MENU_FROM = 500, MENU_TO = 1030;
define('ink-hruler', () => {
  let d = '', t = '';
  for (let i = -61; i <= 240; i++) {
    const x = Math.round(OX + i * UNIT / 2) + .5; if (x < 2 || x > 2223) continue;
    const major = i % 10 === 0;
    d += `M${x} 27V${major ? 5 : i % 2 === 0 ? 16 : 21}`;
    if (major && (x < MENU_FROM || x > MENU_TO)) t += `<text x="${x + 3}" y="16">${i / 2}</text>`;
  }
  return `<style>:host{display:block;overflow:hidden;height:27px}svg{display:block;width:100%;height:27px;font-size:11px}</style><svg><path d="${d}" stroke="#2e3436" stroke-width="1"/><path d="M0 26h4000" stroke="#2e3436" stroke-width="2"/><g fill="#555">${t}</g></svg>`;
});
define('ink-vruler', () => {
  let d = '', t = '';
  for (let i = -50; i <= 102; i++) {
    const y = Math.round(OY - i * UNIT / 2) + .5; if (y > 1094) continue;
    const major = i % 10 === 0;
    if (y > 3) d += `M28 ${y}H${major ? 6 : i % 2 === 0 ? 17 : 21}`;
    if (major) t += String(i / 2).split('').map((c, k) => y + 11 + k * 11 > 0 ? `<text x="9" y="${y + 11 + k * 11}">${c}</text>` : '').join('');
  }
  return `<style>:host{display:block;overflow:hidden}svg{display:block;width:28px;height:100%;font-size:11px}</style><svg><path d="${d}" stroke="#2e3436"/><path d="M27 2V4000" stroke="#2e3436" stroke-width="2"/><path d="M20 1h8l-8 8z" fill="#2e3436"/><g fill="#555" text-anchor="middle">${t}</g></svg>`;
});

define('ink-canvas', () => {
  const boxes = [];
  const at = (w, h, xs, ys) => xs.forEach(x => ys.forEach(y => boxes.push([x, y, w, h])));
  at(19,21,[554,579,1102],[540]); at(21,22,[553,1102],[622,654]);
  at(23,25,[592],[578]); at(23,27,[592,1060],[692]);
  at(21,19,[660],[680,706]); at(34,19,[700,941],[707]);
  at(20,34,[752,782,813,843,873,903],[722]);
  at(21,19,[577],[734,760]); at(22,15,[617,673],[754,784,814]);
  at(19,20,[701,727],[750,783,816,865]); at(22,15,[761,817],[771]);
  at(20,21,[866,892],[768]); at(20,19,[946],[744,770]);
  at(20,19,[1013],[717,742]); at(19,25,[1013],[769]);
  at(19,20,[1060],[748,773]); at(25,19,[761],[795,824]);
  at(26,19,[794],[810]); at(21,20,[838],[798,824]);
  at(25,19,[895],[797,826]); at(24,20,[929],[811]);
  at(20,21,[963],[811,837]); at(19,25,[999,1027],[802]);
  at(27,23,[766,882],[871]); at(21,19,[924],[888,914]); at(22,22,[810,842],[912]);
  const arrow = (x, y, a) => `<path transform="translate(${x} ${y}) rotate(${a})" d="M-10 0l7-7v4h6v-4l7 7-7 7v-4h-6v4z"/>`;
  return `<style>:host{display:block;background:#fff;overflow:hidden;min-height:0}svg{display:block;width:100%;height:100%}</style><svg><g transform="translate(-84 -195)">
<path d="M551.500 190V421" stroke="#666" stroke-width="1"/><path d="M555 935.500H4000" stroke="#666" stroke-width="4"/>
<g fill="none" stroke="#808080" stroke-width="4">${boxes.map(([x,y,w,h]) => `<rect x="${x+2}" y="${y+2}" width="${w-4}" height="${h-4}" rx="1"/>`).join('')}</g>
<path d="M552 934.500H1124" stroke="#fff" stroke-width="1.500"/><path d="M552.500 421V935M1123.500 421V935M552 421.500H1124M552 934.500H1124" fill="none" stroke="#000" stroke-width="1.300" stroke-dasharray="5 5"/>
${arrow(542,412,45)}${arrow(543,678,0)}${arrow(1132,678,0)}${arrow(542,944,-45)}${arrow(838,945,90)}${arrow(1132,944,45)}</g></svg>`;
});

define('ink-scrollbar', el => {
  const v = el.hasAttribute('vertical');
  return `<style>:host{display:flex;box-sizing:border-box;background:#c2c4c2;flex-direction:${v?'column':'row'};${v?'width:19px;border-left:1px solid #b0b2b0;padding:0 5px':'height:18px;border-top:2px solid #b0b2b0;padding:3px 0 4px'}}
i{flex:0 0 ${el.getAttribute('start')}}b{flex:0 0 ${el.getAttribute('length')};background:#787f7d;border-radius:4px}</style><i></i><b></b>`;
});

const PALETTE = `000000 1a1a1a 333333 4d4d4d 666666 808080 999999 b3b3b3 cccccc e6e6e6 ececec f2f2f2 f9f9f9 ffffff
8b0000 ff0000 808000 ffff00 008500 00ff00 008080 00ffff 00008b 1400ff 8b0083 ff00ff
2f0000 5c0000 8d0000 ba0000 e60000 ff0000 ff0010 ff444e ff7a80 ffa6aa ffd2d4
2b0b0d 551114 85181f ae1e28 d9222e e2555e ee8088 f4acb0 f9d4d6
241f1c 4a3638 705456 966e70 ae9292 c9b6b8 e3dbdb
2f1100 5c2000 8b2d00 b83c00 e64a00 ff5500 ff7a00 ff9444 ffae78 ffcaa8 ffe5d3
2a170b 532a11 804018 aa5520 d46a22 de8854 e8a880 f0c5aa f7e1d4
241f1b 4b3f38 6e5d53 967c70 ae9d92 c9beb6 e2dddb
2b2200 574400 876800 b08800 d9a800 ffcc00 ffd400 ffdd2a ffe46a ffeca0 fff4d2
282009 504010 806609 a88a04 ceab00 d9be4a e2cd7e ebdca8 f5edd4
24201b 484434 6c6650 928b6f aca690 c9c3b6 e2e0da
202b00 3e5600 5f8700 7fae00 9fd800 bbff00 c3ff00 d0ff14 deff66 e8ffa0 f2ffd2
20260a 3f4f08 607800 84a200 a2cc00 b6d848 c9e27e d8eaa8 ebf3d4`.split(/\s+/);
define('ink-palette', () => `<style>:host{display:flex;align-items:center;height:23px;flex:none;padding-left:1px}
button{all:unset;flex:1;height:19px}.none{flex:0 0 19px;background:#fff}.end{flex:0 0 2px;height:19px;background:#000}.more{flex:0 0 19px;display:flex;align-items:center;justify-content:center}svg{display:block}</style>
<button class="none" aria-label="Keine"><svg width="19" height="19"><path d="M0 0l19 19M19 0L0 19" stroke="#8b1a1a" stroke-width="2"/></svg></button>${PALETTE.map(c => `<button style="background:#${c}" aria-label="#${c}"></button>`).join('')}<i class="end"></i><button class="more" aria-label="Palette"><svg width="7" height="14"><path d="M7 0v14L0 7z" fill="#2e3436"/></svg></button>`);

define('ink-spin', el => `<style>:host{display:flex;box-sizing:border-box;background:#fff;border:2px solid #c0c0be;border-radius:5px;height:40px;overflow:hidden}
input{all:unset;flex:1;min-width:0;padding-left:12px;font-size:16px;line-height:36px;color:#222}
div{display:flex;flex-direction:column;width:17px;border-left:1px solid #ddd}button{all:unset;flex:1;display:flex;align-items:center;justify-content:center}button+button{border-top:1px solid #ddd}
.dim{background:#f2f2f0;color:#8a8c8a}</style><input aria-label="${el.getAttribute('label')}" value="${el.getAttribute('value')}">
<div><button class="${el.hasAttribute('dim')?'dim':''}" aria-label="Mehr"><svg width="12" height="7" fill="currentColor"><path d="M0 7h12L6 0z"/></svg></button><button aria-label="Weniger"><svg width="12" height="7" fill="currentColor"><path d="M0 0h12L6 7z"/></svg></button></div>`);

define('ink-statusbar', () => `<style>
:host{display:flex;height:41px;flex:none;overflow:hidden;font-size:15px;background:linear-gradient(90deg,#e8e8e600 82%,#e8e8e6 85%),linear-gradient(#e7e7e5,#d8d8d6)}
.pair{display:grid;grid-template-columns:77px 103px;grid-auto-rows:20px;padding:3px 0 0 3px}
b{font-weight:600}
.o{line-height:48px;width:19px;white-space:nowrap}
.sp{margin-top:5px;flex:none}
.s1{width:64px}.s2{width:77px;margin-right:2px}
.sep{flex:none;width:1px;background:#c4c4c2;margin:4px 0 0 6px}
ink-icon{align-items:center;padding-top:4px;margin-left:11px}
.l{margin-left:20px}
.layer{position:relative;margin:5px 0 0 12px}
select{appearance:none;box-sizing:border-box;width:122px;height:40px;padding:0 12px;border:2px solid #b8b8b6;border-radius:5px;background:linear-gradient(#efefed,#d4d4d2);font:inherit;font-size:16px;color:inherit}
.layer svg{position:absolute;right:14px;top:15px}
.xy{margin-left:auto;border-left:1px solid #c4c4c2;display:grid;grid-template-columns:35px 55px;grid-auto-rows:20px;padding:3px 0 0 3px}
.z{width:18px;line-height:48px}
.grip{position:absolute;right:0;bottom:0;background:#fff}
</style><div class="pair"><span>Füllung:</span><b>Ungesetzt</b><span>Kontur:</span><b>Ungesetzt</b></div><span class="o">O:</span><ink-spin class="sp s1" label="Opazität" value="0" dim></ink-spin><i class="sep"></i>
<ink-icon name="eye" size="20"></ink-icon><ink-icon class="l" name="unlock" size="20"></ink-icon>
<div class="layer"><select aria-label="Ebene"><option>•Ebene 1</option></select><svg width="14" height="9"><path d="M0 0h14l-7 9z" fill="#2e3436"/></svg></div>
<div class="xy"><span>X:</span><span>18,24</span><span>Y:</span><span>48,66</span></div><span class="z">Z:</span><ink-spin class="sp s2" label="Zoom" value="280%"></ink-spin>
<svg class="grip" width="16" height="16"><path d="M2 16L16 2M8 16l8-8M13 16l3-3" stroke="#888" stroke-width="1.500"/></svg>`);

define('ink-window', () => `<style>
:host{display:flex;flex-direction:column;height:100vh}
main{flex:1;min-height:0;display:grid;grid-template:27px minmax(0,1fr) 25px / 56px 28px minmax(0,1fr) 32px 61px}
ink-toolbox{grid-row:1/4;grid-column:1}
.lock{grid-row:1;grid-column:2;display:flex;align-items:center;justify-content:center}
ink-hruler{grid-row:1;grid-column:3}ink-vruler{grid-row:2/4;grid-column:2}
ink-canvas{grid-row:2;grid-column:3}
.corner{grid-column:4;display:flex;align-items:center;justify-content:center;padding-right:8px}
.t{grid-row:1}.b{grid-row:3}
.v{grid-row:2;grid-column:4;margin-left:3px}
.h{grid-row:3;grid-column:3;margin-top:3px}
ink-snapbar{grid-row:1/4;grid-column:5}
.p{flex:none;height:19px;margin-right:17px}
</style><ink-titlebar>*Neues Dokument 1 - Inkscape</ink-titlebar><ink-menubar></ink-menubar><ink-commandbar></ink-commandbar><ink-controlbar></ink-controlbar>
<main><ink-toolbox></ink-toolbox><div class="lock"><ink-icon name="lock" size="15"></ink-icon></div><ink-hruler></ink-hruler><div class="corner t"><ink-icon name="zoom11" size="18"></ink-icon></div>
<ink-vruler></ink-vruler><ink-canvas></ink-canvas><ink-scrollbar class="v" vertical start="61%" length="78px"></ink-scrollbar>
<ink-scrollbar class="h" start="29%" length="500px"></ink-scrollbar><div class="corner b"><ink-icon name="cms" size="18"></ink-icon></div><ink-snapbar></ink-snapbar></main>
<ink-palette></ink-palette><ink-scrollbar class="p" start="4px" length="697px"></ink-scrollbar><ink-statusbar></ink-statusbar>`);
</script>
</body>
</html>
